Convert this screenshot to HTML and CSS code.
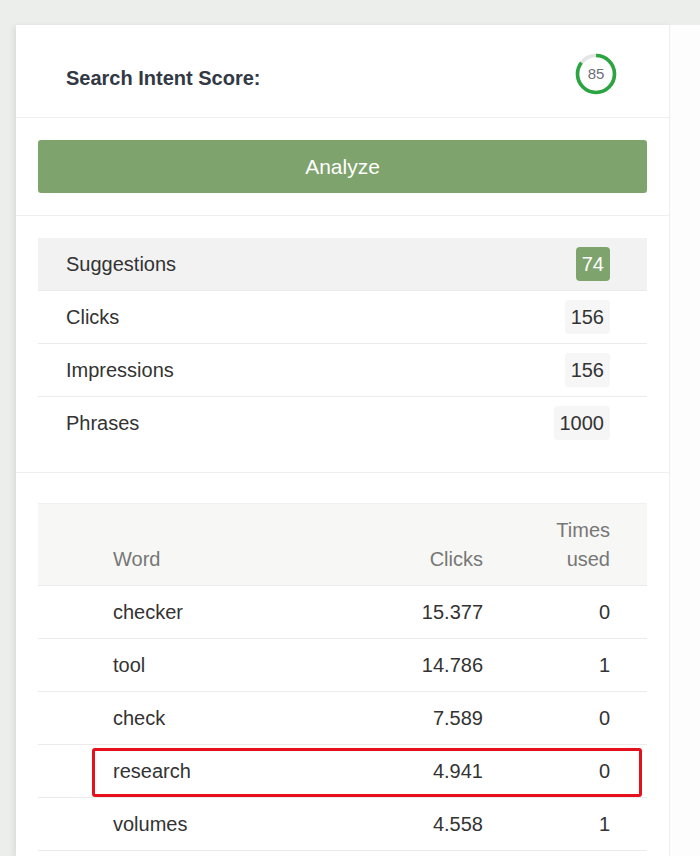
FILE: index.html
```html
<!DOCTYPE html>
<html>
<head>
<meta charset="utf-8">
<link rel="stylesheet" href="styles.css">
</head>
<body>
<div class="page">
  <div class="card">
    <div class="score-head">
      <div class="score-title">Search Intent Score:</div>
      <div class="ring">
        <svg width="42" height="42" viewBox="0 0 42 42">
          <circle cx="21" cy="21" r="18.5" fill="none" stroke="#e4e4e4" stroke-width="3.6"/>
          <circle cx="21" cy="21" r="18.5" fill="none" stroke="#2ba542" stroke-width="3.6"
                  stroke-dasharray="98.8 116.2" transform="rotate(-90 21 21)"/>
        </svg>
        <span class="ring-num">85</span>
      </div>
    </div>
    <div class="section">
      <div class="btn">Analyze</div>
    </div>
    <div class="section stats-section">
      <div class="stats">
        <div class="stat active"><span>Suggestions</span><span class="badge green">74</span></div>
        <div class="stat"><span>Clicks</span><span class="badge">156</span></div>
        <div class="stat"><span>Impressions</span><span class="badge">156</span></div>
        <div class="stat"><span>Phrases</span><span class="badge">1000</span></div>
      </div>
    </div>
    <div class="section table-section">
      <div class="table">
        <div class="trow thead">
          <div>Word</div>
          <div class="num">Clicks</div>
          <div class="num">Times<br>used</div>
        </div>
        <div class="trow"><div>checker</div><div class="num">15.377</div><div class="num">0</div></div>
        <div class="trow"><div>tool</div><div class="num">14.786</div><div class="num">1</div></div>
        <div class="trow"><div>check</div><div class="num">7.589</div><div class="num">0</div></div>
        <div class="trow marked"><div>research</div><div class="num">4.941</div><div class="num">0</div><span class="highlight"></span></div>
        <div class="trow"><div>volumes</div><div class="num">4.558</div><div class="num">1</div></div>
      </div>
    </div>
  </div>
  <div class="side"></div>
</div>
</body>
</html>
```
FILE: styles.css
```css
html, body {
  margin: 0;
  padding: 0;
}
body {
  background: #ebeeea;
  font-family: "Liberation Sans", Arial, sans-serif;
  color: #333;
  height: 856px;
  overflow: hidden;
}
.page {
  display: flex;
  padding-top: 25px;
  padding-left: 16px;
  align-items: stretch;
  height: 831px;
}
.card {
  width: 653px;
  background: #fff;
  border-right: 1px solid #ededed;
  box-shadow: -2px 1px 6px rgba(0, 0, 0, 0.08);
  flex: none;
}
.side {
  flex: 1;
  background: #fdfdfd;
}
.score-head {
  height: 92px;
  border-bottom: 1px solid #eeeeee;
  display: flex;
  align-items: center;
  justify-content: space-between;
  padding: 0 52px 0 50px;
}
.score-title {
  font-weight: bold;
  font-size: 20px;
  color: #323844;
  margin-top: 15px;
}
.ring {
  position: relative;
  width: 42px;
  height: 42px;
  margin-top: 5px;
}
.ring svg {
  display: block;
}
.ring-num {
  position: absolute;
  left: 0;
  top: 0;
  width: 42px;
  line-height: 42px;
  text-align: center;
  font-size: 15px;
  color: #6c7078;
}
.section {
  padding: 22px 22px;
  border-bottom: 1px solid #eeeeee;
}
.stats-section {
  padding-bottom: 22px;
}
.btn {
  height: 53px;
  background: #7ea36c;
  border-radius: 3px;
  color: #fff;
  font-size: 21px;
  display: flex;
  align-items: center;
  justify-content: center;
}
.stats {
  display: flex;
  flex-direction: column;
}
.stat {
  height: 52px;
  border-bottom: 1px solid #ebebeb;
  display: flex;
  align-items: center;
  justify-content: space-between;
  padding: 0 37px 0 28px;
  font-size: 20px;
  color: #333;
}
.stat:last-child {
  border-bottom-color: transparent;
}
.stat.active {
  background: #f2f2f2;
}
.badge {
  background: #f6f6f6;
  border-radius: 4px;
  padding: 0 6px;
  height: 34px;
  line-height: 34px;
  font-size: 20px;
  color: #333;
}
.badge.green {
  background: #7ea36c;
  color: #fff;
}
.table-section {
  padding-top: 30px;
  border-bottom: none;
}
.trow {
  display: grid;
  grid-template-columns: 1fr 120px 127px;
  align-items: center;
  height: 53px;
  box-sizing: border-box;
  border-bottom: 1px solid #ebebeb;
  padding: 0 37px 0 75px;
  font-size: 20px;
  color: #333;
  position: relative;
}
.trow.thead {
  height: 83px;
  background: #f7f7f5;
  color: #777;
  align-items: end;
  line-height: 29px;
  padding-bottom: 11px;
  border-top: 1px solid #f0f0ee;
}
.num {
  text-align: right;
}
.highlight {
  position: absolute;
  left: 54px;
  right: 5px;
  top: 3px;
  bottom: 0;
  border: 3px solid #e5101c;
  border-radius: 3px;
}
```
